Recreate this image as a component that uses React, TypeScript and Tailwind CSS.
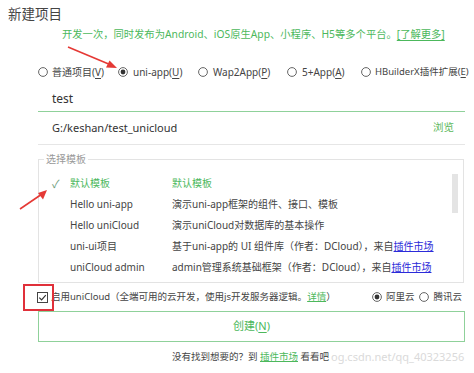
import React from "react";

const Radio = ({ on }: { on?: boolean }) => (
  <svg width="10" height="10" viewBox="0 0 10 10" className="shrink-0">
    <circle cx="5" cy="5" r="4.4" fill="white" stroke="#555" strokeWidth="0.9" />
    {on && <circle cx="5" cy="5" r="2.4" fill="#333" />}
  </svg>
);

const U = ({ children }: { children: React.ReactNode }) => (
  <span className="underline underline-offset-2">{children}</span>
);

export default function App() {
  const font = { fontFamily: '"Noto Sans", "Noto Sans CJK SC", sans-serif' };
  const rows = [
    ["Hello uni-app", "演示uni-app框架的组件、接口、模板"],
    ["Hello uniCloud", "演示uniCloud对数据库的基本操作"],
  ];
  return (
    <div className="relative w-[474px] h-[373px] bg-white overflow-hidden text-[#333]" style={font}>
      <div className="pt-[5px] pl-[8px] text-[13.5px] leading-[18px] text-[#444]">新建项目</div>
      <div className="mt-[2px] pl-[62px] h-[18px] text-[10.3px] leading-[18px] text-[#4cb85c] whitespace-nowrap">
        开发一次，同时发布为Android、iOS原生App、小程序、H5等多个平台。<U>[了解更多]</U>
      </div>
      <div className="mt-[19px] pl-[38px] flex items-center h-[20px] text-[10px] text-[#444] whitespace-nowrap">
        <div className="flex items-center gap-[4px] w-[80px]"><Radio /><span>普通项目(<U>V</U>)</span></div>
        <div className="flex items-center gap-[5px] w-[80px]"><Radio on /><span>uni-app(<U>U</U>)</span></div>
        <div className="flex items-center gap-[5px] w-[89px]"><Radio /><span>Wap2App(<U>P</U>)</span></div>
        <div className="flex items-center gap-[5px] w-[74px]"><Radio /><span>5+App(<U>A</U>)</span></div>
        <div className="flex items-center gap-[4px] text-[9.5px]"><Radio /><span>HBuilderX插件扩展(<U>E</U>)</span></div>
      </div>
      <div className="ml-[38px] w-[427px]">
        <div className="mt-[4px] h-[26px] border-b border-[#8fd19a] pl-[14px] flex items-center text-[12px] text-[#333]">test</div>
        <div className="h-[33px] border-b border-[#e6e6e6] pl-[14px] pr-[11px] flex items-center justify-between text-[11px] text-[#333]">
          <span>G:/keshan/test_unicloud</span>
          <span className="text-[10.5px] text-[#5cb85c]">浏览</span>
        </div>
        <div className="relative mt-[14px] w-[426px] h-[124px] border border-[#e3e3e3]">
          <div className="absolute left-[5px] top-[-8px] bg-white px-[2px] text-[10px] leading-[14px] text-[#999]">选择模板</div>
          <div className="absolute right-[5px] top-[14px] w-[6px] h-[39px] bg-[#e4e4e4]" />
          <div className="pt-[13px] text-[10px] leading-[21px]">
            <div className="flex items-center h-[21px] text-[#4cb85c]">
              <span className="w-[31px] pl-[13px] text-[11px] text-[#6a9a78]">✓</span>
              <span className="w-[102px]">默认模板</span>
              <span>默认模板</span>
            </div>
            {rows.map(([a, b]) => (
              <div key={a} className="flex items-center h-[21px] text-[#444]">
                <span className="w-[31px]" />
                <span className="w-[102px]">{a}</span>
                <span>{b}</span>
              </div>
            ))}
            <div className="flex items-center h-[21px] text-[#444] whitespace-nowrap">
              <span className="w-[31px]" />
              <span className="w-[102px]">uni-ui项目</span>
              <span>基于uni-app的 UI 组件库（作者：DCloud），来自<span className="text-[#2b2bd9] underline">插件市场</span></span>
            </div>
            <div className="flex items-center h-[21px] text-[#444] whitespace-nowrap">
              <span className="w-[31px]" />
              <span className="w-[102px]">uniCloud admin</span>
              <span>admin管理系统基础框架（作者：DCloud），来自<span className="text-[#2b2bd9] underline">插件市场</span></span>
            </div>
          </div>
        </div>
      </div>
      <div className="mt-[3px] pl-[37px] pr-[12px] h-[22px] flex items-center justify-between text-[9.5px] text-[#444] whitespace-nowrap">
        <div className="flex items-center gap-[3px]">
          <svg width="11" height="11" viewBox="0 0 11 11" className="shrink-0">
            <rect x="0.5" y="0.5" width="10" height="10" fill="white" stroke="#444" strokeWidth="1" />
            <path d="M2.3 5.6 L4.6 7.9 L8.8 3.2" fill="none" stroke="#333" strokeWidth="1.2" />
          </svg>
          <span>启用uniCloud（全端可用的云开发，使用js开发服务器逻辑。<span className="text-[#4cb85c] underline">详情</span>）</span>
        </div>
        <div className="flex items-center gap-[4px]">
          <Radio on /><span className="mr-[1px]">阿里云</span><Radio /><span>腾讯云</span>
        </div>
      </div>
      <div className="mt-[3px] ml-[38px] w-[427px] h-[31px] border border-[#8fd19a] flex items-center justify-center text-[11px] text-[#4cb85c]">
        <span>创建(<U>N</U>)</span>
      </div>
      <div className="mt-[7px] pl-[172px] flex items-center h-[16px] text-[9.5px] leading-[16px] text-[#444] whitespace-nowrap">
        <span>没有找到想要的？到 <span className="text-[#4cb85c] underline">插件市场</span> 看看吧</span>
        <span className="text-[#dadada] text-[11px] ml-[2px]">og.csdn.net/qq_40323256</span>
      </div>
      <div className="absolute left-[23px] top-[284px] w-[31px] h-[27px] border-2 border-[#e0303a]" />
      <svg className="absolute left-0 top-0 pointer-events-none" width="474" height="373">
        <line x1="68" y1="47" x2="111" y2="65" stroke="#e53935" strokeWidth="1.6" />
        <polygon points="117,68 106,67.5 109.5,60.5" fill="#e53935" />
        <line x1="20" y1="209" x2="42" y2="194" stroke="#e53935" strokeWidth="1.6" />
        <polygon points="47,190 43,199.5 38,193" fill="#e53935" />
      </svg>
    </div>
  );
}
